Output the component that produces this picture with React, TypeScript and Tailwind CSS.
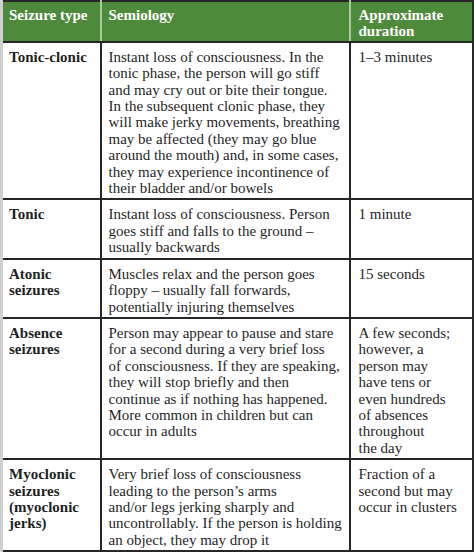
const rows = [
  {
    type: ['Tonic-clonic'],
    semiology: [
      'Instant loss of consciousness. In the',
      'tonic phase, the person will go stiff',
      'and may cry out or bite their tongue.',
      'In the subsequent clonic phase, they',
      'will make jerky movements, breathing',
      'may be affected (they may go blue',
      'around the mouth) and, in some cases,',
      'they may experience incontinence of',
      'their bladder and/or bowels',
    ],
    duration: ['1–3 minutes'],
  },
  {
    type: ['Tonic'],
    semiology: ['Instant loss of consciousness. Person', 'goes stiff and falls to the ground –', 'usually backwards'],
    duration: ['1 minute'],
  },
  {
    type: ['Atonic', 'seizures'],
    semiology: ['Muscles relax and the person goes', 'floppy – usually fall forwards,', 'potentially injuring themselves'],
    duration: ['15 seconds'],
  },
  {
    type: ['Absence', 'seizures'],
    semiology: [
      'Person may appear to pause and stare',
      'for a second during a very brief loss',
      'of consciousness. If they are speaking,',
      'they will stop briefly and then',
      'continue as if nothing has happened.',
      'More common in children but can',
      'occur in adults',
    ],
    duration: ['A few seconds;', 'however, a', 'person may', 'have tens or', 'even hundreds', 'of absences', 'throughout', 'the day'],
  },
  {
    type: ['Myoclonic', 'seizures', '(myoclonic', 'jerks)'],
    semiology: [
      'Very brief loss of consciousness',
      'leading to the person’s arms',
      'and/or legs jerking sharply and',
      'uncontrollably. If the person is holding',
      'an object, they may drop it',
    ],
    duration: ['Fraction of a', 'second but may', 'occur in clusters'],
  },
];

function Lines({ lines }: { lines: string[] }) {
  return (
    <>
      {lines.map((l, i) => (
        <span key={i} className="block whitespace-nowrap">
          {l}
        </span>
      ))}
    </>
  );
}

export default function App() {
  return (
    <div className="w-[474px] h-[558px] bg-white font-['Liberation_Serif',serif] text-[#1f1f1f]">
      <table className="w-[471px] border-collapse table-fixed text-[15px] leading-[16.4px]">
        <colgroup>
          <col className="w-[99px]" />
          <col className="w-[249px]" />
          <col className="w-[123px]" />
        </colgroup>
        <thead>
          <tr className="bg-[#4e8a3b] text-white">
            <th className="border-2 border-[#262626] border-l-[3px] border-l-[#d0d0d0] border-r-[#a9c99f] px-[6px] pt-[5px] text-left align-top font-bold">
              Seizure type
            </th>
            <th className="border-2 border-[#262626] border-l-[#a9c99f] border-r-[#a9c99f] pl-[7px] pr-[3px] pt-[5px] text-left align-top font-bold">
              Semiology
            </th>
            <th className="border-2 border-[#262626] border-l-[#a9c99f] pl-[8px] pr-[4px] pt-[5px] pb-[1px] text-left align-top font-bold">
              <Lines lines={['Approximate', 'duration']} />
            </th>
          </tr>
        </thead>
        <tbody>
          {rows.map((r) => (
            <tr key={r.type.join(' ')}>
              <td className="border-2 border-[#262626] border-l-[3px] border-l-[#d0d0d0] px-[6px] pt-[6px] pb-[2px] align-top font-bold">
                <Lines lines={r.type} />
              </td>
              <td className="border-2 border-[#262626] pl-[7px] pr-[3px] pt-[6px] pb-[2px] align-top">
                <Lines lines={r.semiology} />
              </td>
              <td className="border-2 border-[#262626] pl-[8px] pr-[4px] pt-[6px] pb-[2px] align-top">
                <Lines lines={r.duration} />
              </td>
            </tr>
          ))}
        </tbody>
      </table>
    </div>
  );
}
